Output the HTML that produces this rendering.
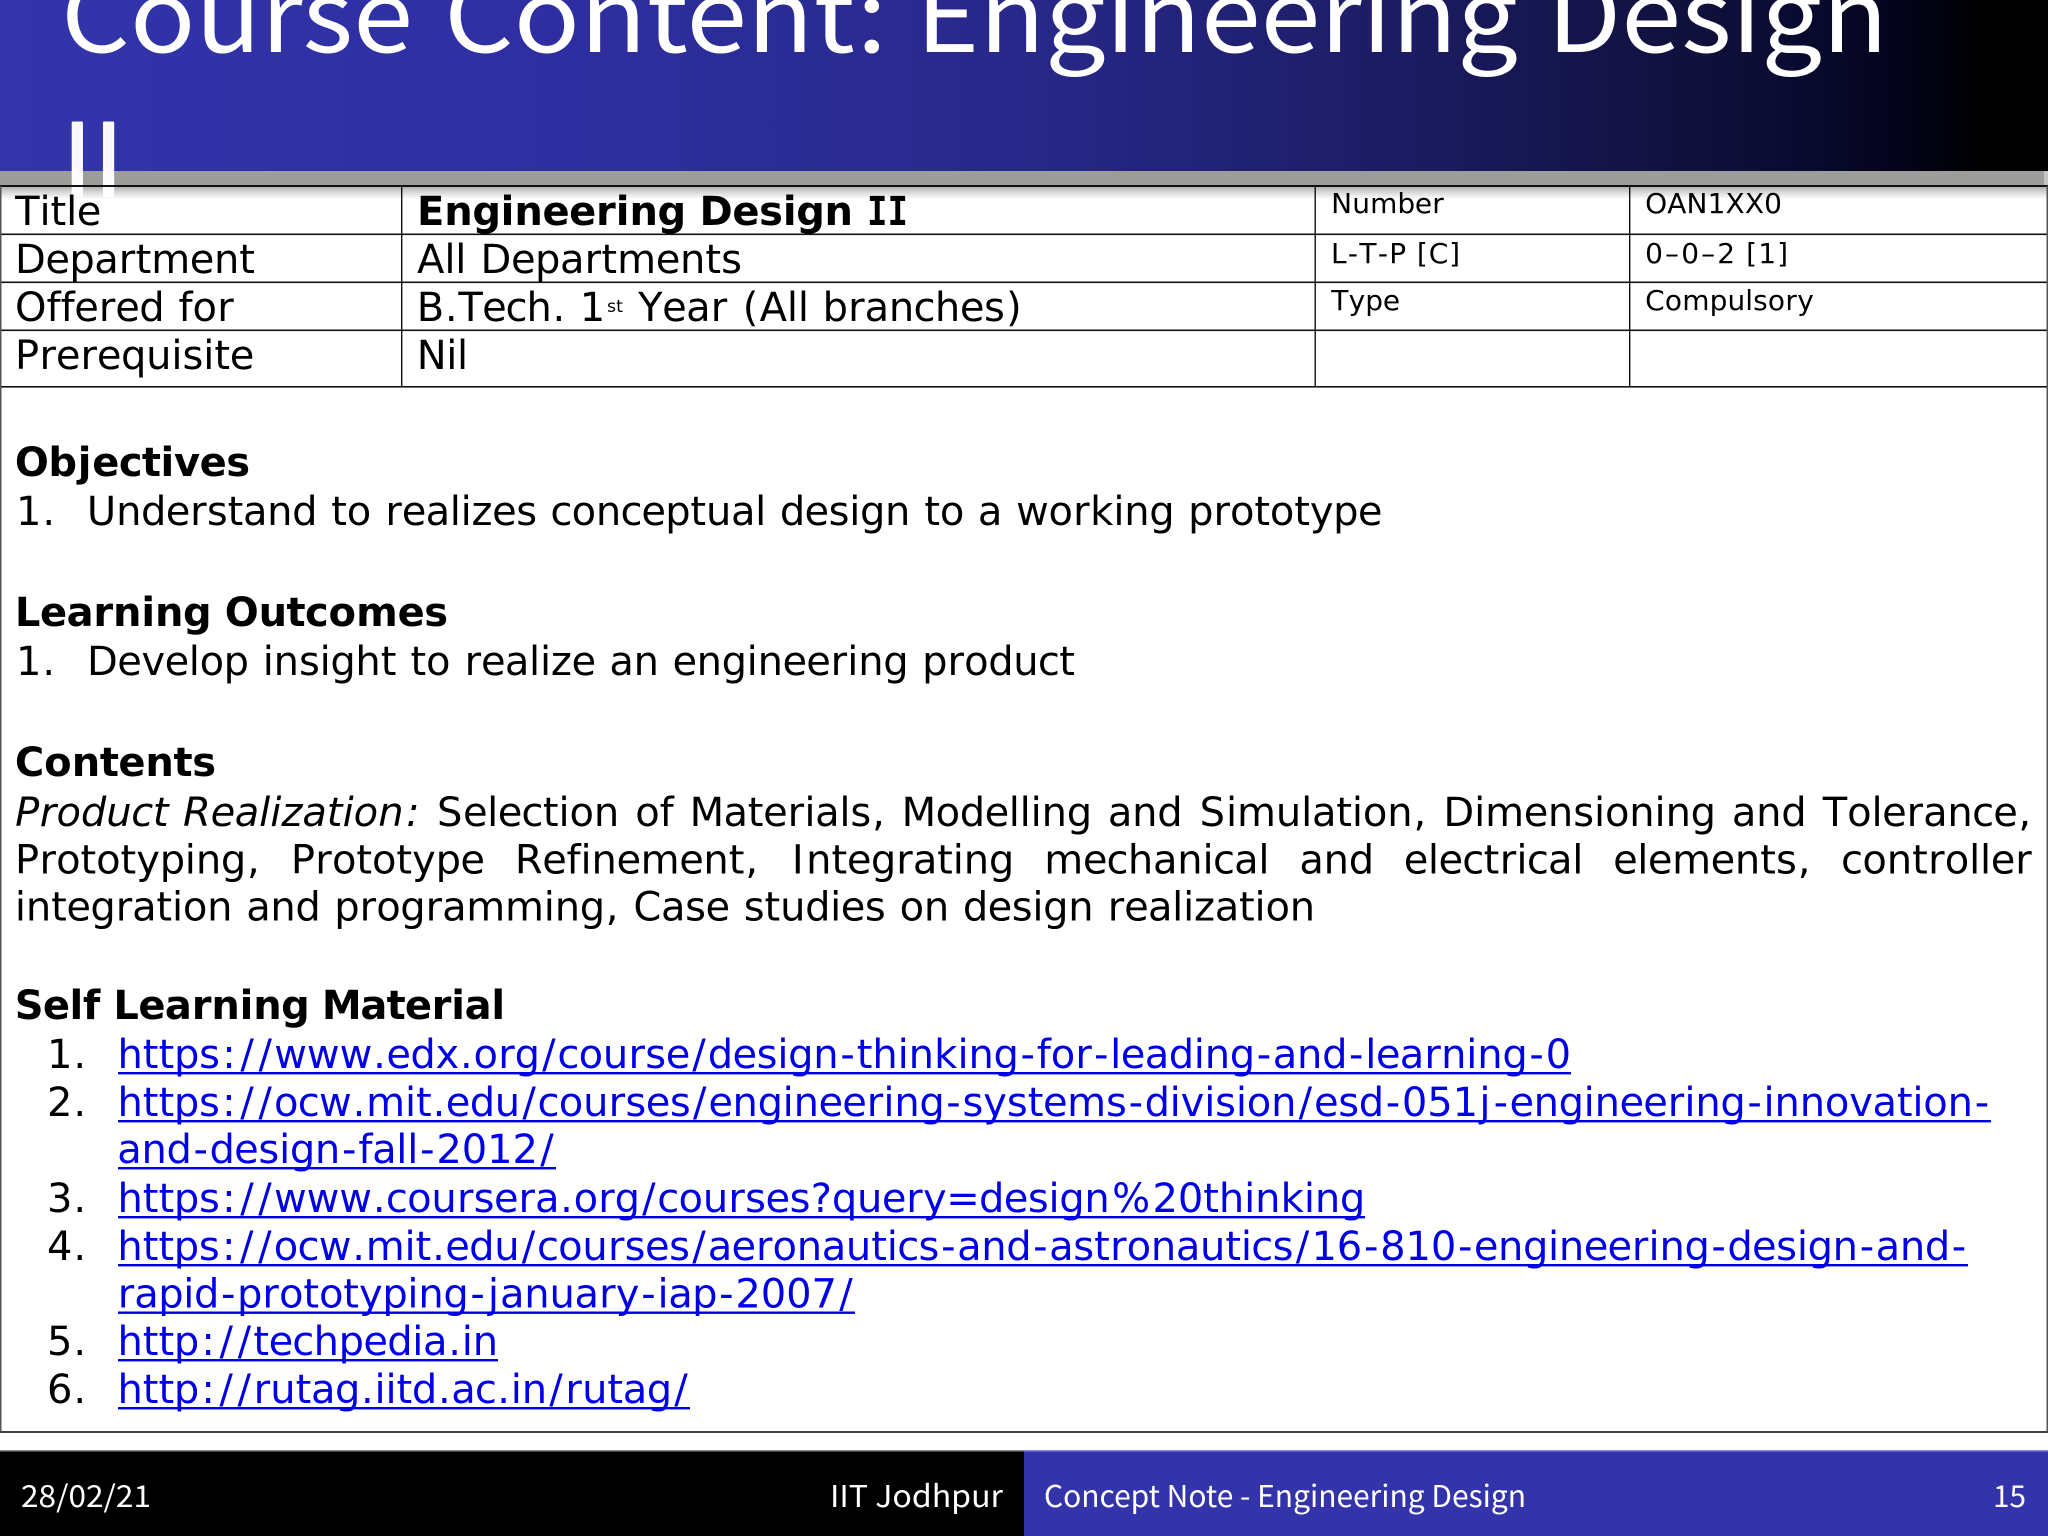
<!DOCTYPE html>
<html lang="en"><head><meta charset="utf-8"><title>Course Content: Engineering Design II</title>
<style>
html,body{margin:0;padding:0;background:#fff}
body{width:2048px;height:1536px;position:relative;overflow:hidden}
svg{position:absolute;left:0;top:0;display:block}
.v text{font-variant-ligatures:none;font-kerning:none}
</style></head><body>
<svg width="2048" height="1536" viewBox="0 0 2048 1536" xmlns="http://www.w3.org/2000/svg">
<defs>
<linearGradient id="hg" x1="0" x2="2048" y1="0" y2="0" gradientUnits="userSpaceOnUse">
<stop offset="0" stop-color="#3434ab"/><stop offset=".25" stop-color="#2f2fa3"/><stop offset=".5" stop-color="#28288a"/><stop offset=".68" stop-color="#1c1c64"/><stop offset=".83" stop-color="#10103c"/><stop offset=".88" stop-color="#0a0a30"/><stop offset=".93" stop-color="#03031a"/><stop offset=".97" stop-color="#000"/><stop offset="1" stop-color="#000"/>
</linearGradient>
<linearGradient id="sh" x1="0" x2="0" y1="0" y2="1"><stop offset="0" stop-color="#b4b4b4"/><stop offset=".5" stop-color="#dcdcdc"/><stop offset="1" stop-color="#fff"/></linearGradient>
</defs>
<rect width="2048" height="1536" fill="#fff"/>
<rect width="2048" height="171" fill="url(#hg)"/>
<rect y="171" width="2048" height="14" fill="#9d9d9b"/>
<rect x="2044" y="171" width="4" height="14" fill="#c4c4c2"/>
<rect y="187" width="2048" height="12" fill="url(#sh)"/>
<!-- title -->
<g font-family="'Noto Sans CJK SC','Liberation Sans',sans-serif" fill="#fff" font-size="100">
<text x="61" y="52" textLength="352" lengthAdjust="spacingAndGlyphs">Course</text>
<text x="444" y="52" textLength="443" lengthAdjust="spacingAndGlyphs">Content:</text>
<text x="916" y="52" textLength="602" lengthAdjust="spacingAndGlyphs">Engineering</text>
<text x="1547" y="52" textLength="341" lengthAdjust="spacingAndGlyphs">Design</text>
<g stroke="#fff" stroke-width="2" stroke-linejoin="round" text-anchor="middle" fill-opacity=".97" stroke-opacity=".97">
<text x="77.3" y="196">I</text><text x="108.5" y="196">I</text>
</g>
</g>
<rect y="185" width="2048" height="2" fill="#111"/>
<!-- table lines -->
<g fill="#111">
<rect y="233.5" width="2048" height="1.6"/><rect y="281.5" width="2048" height="1.6"/><rect y="329.5" width="2048" height="1.6"/><rect y="386" width="2048" height="1.6"/>
<rect x="401" y="186" width="1.4" height="201"/><rect x="1314.5" y="186" width="1.4" height="201"/><rect x="1629" y="186" width="1.4" height="201"/>
</g>
<rect x="0" y="186" width="1.5" height="1247" fill="#555"/><rect x="2046.5" y="186" width="1.5" height="1247" fill="#555"/>
<rect y="1431" width="2048" height="2" fill="#444"/>
<!-- table -->
<g class="v" font-family="'DejaVu Sans',sans-serif" fill="#000" font-size="40">
<text x="15" y="225" textLength="86" lengthAdjust="spacingAndGlyphs">Title</text>
<text x="15" y="273" textLength="240" lengthAdjust="spacingAndGlyphs">Department</text>
<text x="15" y="321" textLength="219" lengthAdjust="spacingAndGlyphs">Offered for</text>
<text x="15" y="369" textLength="239" lengthAdjust="spacingAndGlyphs">Prerequisite</text>
<text x="417" y="225" font-weight="700" textLength="436" lengthAdjust="spacingAndGlyphs">Engineering Design</text>
<text x="417" y="273" textLength="325" lengthAdjust="spacingAndGlyphs">All Departments</text>
<text x="417" y="321" textLength="188" lengthAdjust="spacingAndGlyphs">B.Tech. 1</text>
<text x="638" y="321" textLength="385" lengthAdjust="spacingAndGlyphs">Year (All branches)</text>
<text x="417" y="369" textLength="51" lengthAdjust="spacingAndGlyphs">Nil</text>
</g>
<text x="867" y="225" font-family="'DejaVu Sans Mono','Liberation Mono',monospace" font-weight="700" font-size="40" textLength="41" lengthAdjust="spacingAndGlyphs">II</text>
<text x="607" y="312" font-family="'DejaVu Sans',sans-serif" font-size="17" textLength="16" lengthAdjust="spacingAndGlyphs">st</text>
<g class="v" font-family="'DejaVu Sans',sans-serif" fill="#000" font-size="28">
<text x="1331" y="213" textLength="113" lengthAdjust="spacingAndGlyphs">Number</text>
<text x="1645" y="213" textLength="137" lengthAdjust="spacingAndGlyphs">OAN1XX0</text>
<text x="1331" y="263" textLength="130" lengthAdjust="spacingAndGlyphs">L-T-P [C]</text>
<text x="1645" y="263" textLength="144" lengthAdjust="spacingAndGlyphs">0–0–2 [1]</text>
<text x="1331" y="310" textLength="69" lengthAdjust="spacingAndGlyphs">Type</text>
<text x="1645" y="310" textLength="169" lengthAdjust="spacingAndGlyphs">Compulsory</text>
</g>
<!-- body -->
<g class="v" font-family="'DejaVu Sans',sans-serif" fill="#000" font-size="40">
<g font-weight="700">
<text x="15" y="476" textLength="235" lengthAdjust="spacingAndGlyphs">Objectives</text>
<text x="15" y="626" textLength="433" lengthAdjust="spacingAndGlyphs">Learning Outcomes</text>
<text x="15" y="776" textLength="201" lengthAdjust="spacingAndGlyphs">Contents</text>
<text x="15" y="1019" textLength="490" lengthAdjust="spacingAndGlyphs">Self Learning Material</text>
</g>
<text x="16" y="525">1.</text>
<text x="87" y="525" textLength="1295" lengthAdjust="spacingAndGlyphs">Understand to realizes conceptual design to a working prototype</text>
<text x="16" y="675">1.</text>
<text x="87" y="675" textLength="988" lengthAdjust="spacingAndGlyphs">Develop insight to realize an engineering product</text>
<text x="15" y="826" font-style="italic" textLength="407" lengthAdjust="spacingAndGlyphs">Product Realization:</text>
<text class="j" x="436" y="826" textLength="1596" lengthAdjust="spacing">Selection of Materials, Modelling and Simulation, Dimensioning and Tolerance,</text>
<text class="j" x="15" y="873.5" textLength="2017" lengthAdjust="spacing">Prototyping, Prototype Refinement, Integrating mechanical and electrical elements, controller</text>
<text x="15" y="920.5" textLength="1300" lengthAdjust="spacingAndGlyphs">integration and programming, Case studies on design realization</text>
<text x="47" y="1068">1.</text><text x="47" y="1116">2.</text><text x="47" y="1212">3.</text><text x="47" y="1260">4.</text><text x="47" y="1355">5.</text><text x="47" y="1403">6.</text>
</g>
<g class="v" font-family="'DejaVu Sans',sans-serif" fill="#0000e6" font-size="40">
<text x="117.5" y="1068" textLength="1453.5" lengthAdjust="spacingAndGlyphs">https://www.edx.org/course/design-thinking-for-leading-and-learning-0</text>
<text x="117.5" y="1116" textLength="1873.5" lengthAdjust="spacingAndGlyphs">https://ocw.mit.edu/courses/engineering-systems-division/esd-051j-engineering-innovation-</text>
<text x="117.5" y="1163" textLength="438.5" lengthAdjust="spacingAndGlyphs">and-design-fall-2012/</text>
<text x="117.5" y="1212" textLength="1247.5" lengthAdjust="spacingAndGlyphs">https://www.coursera.org/courses?query=design%20thinking</text>
<text x="117.5" y="1260" textLength="1850.5" lengthAdjust="spacingAndGlyphs">https://ocw.mit.edu/courses/aeronautics-and-astronautics/16-810-engineering-design-and-</text>
<text x="117.5" y="1307.5" textLength="737.5" lengthAdjust="spacingAndGlyphs">rapid-prototyping-january-iap-2007/</text>
<text x="117.5" y="1355" textLength="380.5" lengthAdjust="spacingAndGlyphs">http://techpedia.in</text>
<text x="117.5" y="1403" textLength="572.5" lengthAdjust="spacingAndGlyphs">http://rutag.iitd.ac.in/rutag/</text>
</g>
<g fill="#0000e6">
<rect x="118" y="1072" width="1453" height="2.4"/><rect x="118" y="1120" width="1873" height="2.4"/><rect x="118" y="1167" width="438" height="2.4"/><rect x="118" y="1216" width="1247" height="2.4"/><rect x="118" y="1264" width="1850" height="2.4"/><rect x="118" y="1311.5" width="737" height="2.4"/><rect x="118" y="1359" width="380" height="2.4"/><rect x="118" y="1407" width="572" height="2.4"/>
</g>
<!-- footer -->
<rect y="1450" width="1024" height="86" fill="#000"/>
<rect x="1024" y="1450" width="1024" height="86" fill="#3333aa"/>
<rect y="1450" width="1024" height="1.5" fill="#8a8a8a"/>
<rect x="1024" y="1450" width="1024" height="1.5" fill="#8a8ae0"/>
<g font-family="'Noto Sans CJK SC','Liberation Sans',sans-serif" fill="#fff" font-size="30">
<text x="21" y="1507" textLength="130" lengthAdjust="spacingAndGlyphs">28/02/21</text>
<text x="830" y="1507" textLength="173" lengthAdjust="spacingAndGlyphs">IIT Jodhpur</text>
<text x="1044" y="1507" textLength="482" lengthAdjust="spacingAndGlyphs">Concept Note - Engineering Design</text>
<text x="1993" y="1507" textLength="33" lengthAdjust="spacingAndGlyphs">15</text>
</g>
</svg>
<script>
(function(){
var R={' ':352,'!':394,'%':1076,"'":269,'(':454,')':454,',':364,'-':454,'.':364,'/':454,':':454,';':454,'=':818,'?':545,'[':454,']':454,'–':636,
A:684,B:686,C:698,D:771,E:632,F:575,G:775,H:751,I:421,J:455,K:693,L:557,M:843,N:748,O:787,P:603,Q:787,R:695,S:684,T:616,U:732,V:684,W:989,X:685,Y:615,Z:685,
a:601,b:623,c:521,d:623,e:596,f:352,g:623,h:633,i:274,j:344,k:592,l:274,m:973,n:633,o:607,p:623,q:623,r:427,s:521,t:394,u:633,v:592,w:818,x:592,y:592,z:525};
'0123456789'.split('').forEach(function(d){R[d]=636});
var B={' ':342,':':402,'.':380,',':360,'-':481,
A:776,B:762,C:724,D:830,E:683,F:650,G:811,H:837,I:546,J:555,K:771,L:637,M:948,N:847,O:850,P:733,Q:850,R:782,S:710,T:682,U:812,V:764,W:1128,X:764,Y:737,Z:692,
a:668,b:699,c:588,d:699,e:664,f:422,g:699,h:712,i:342,j:403,k:671,l:342,m:1058,n:712,o:687,p:699,q:699,r:497,s:593,t:456,u:712,v:650,w:979,x:669,y:651,z:597};
var ctx=document.createElement('canvas').getContext('2d');
document.querySelectorAll('g.v text').forEach(function(t){
var cs=getComputedStyle(t),size=parseFloat(cs.fontSize),bold=parseInt(cs.fontWeight,10)>=600,it=cs.fontStyle==='italic';
ctx.font=(it?'italic ':'')+(bold?'bold ':'')+size+'px "DejaVu Sans"';
var tbl=bold?B:R,s=t.textContent.split(''),target=parseFloat(t.getAttribute('textLength'))||0,j=t.classList.contains('j');
var w=s.map(function(c){return tbl[c]?tbl[c]*size/1000:ctx.measureText(c).width});
var total=w.reduce(function(a,b){return a+b},0);
if(target){
if(j){var n=s.filter(function(c){return c===' '}).length,e=(target-total)/n;w=w.map(function(v,i){return s[i]===' '?v+e:v})}
else{var k=target/total;w=w.map(function(v){return v*k})}
}
var cur=parseFloat(t.getAttribute('x')),xs=[];
s.forEach(function(c,i){xs.push((cur+(w[i]-ctx.measureText(c).width)/2).toFixed(2));cur+=w[i]});
t.removeAttribute('textLength');t.removeAttribute('lengthAdjust');
t.setAttribute('x',xs.join(' '));
});
})();
</script>
</body></html>
